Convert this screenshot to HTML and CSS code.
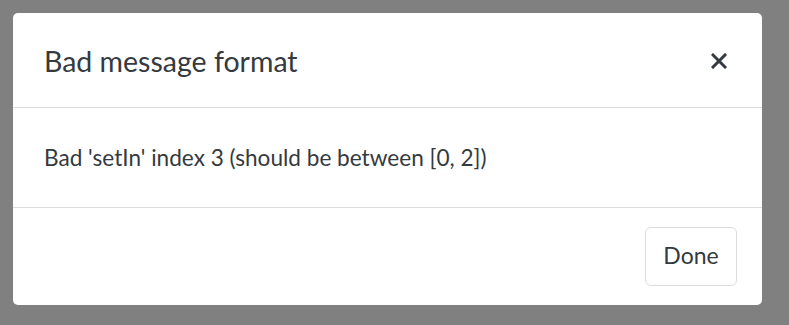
FILE: index.html
```html
<!DOCTYPE html>
<html lang="en">
<head>
<meta charset="utf-8">
<title>Bad message format</title>
<link rel="stylesheet" href="styles.css">
</head>
<body>
<div class="backdrop">
  <div class="modal">
    <div class="modal-header">
      <h5 class="modal-title">Bad message format</h5>
      <button class="close" aria-label="Close">
        <svg width="16" height="16" viewBox="0 0 16 16"><path d="M2 2 L14 14 M14 2 L2 14" stroke="#343a40" stroke-width="3" stroke-linecap="square" fill="none"/></svg>
      </button>
    </div>
    <div class="modal-body">Bad 'setIn' index 3 (should be between [0, 2])</div>
    <div class="modal-footer">
      <button class="btn">Done</button>
    </div>
  </div>
</div>
</body>
</html>
```

FILE: styles.css
```css
html, body {
  margin: 0;
  padding: 0;
}
body {
  background: #808080;
  font-family: Lato, "Liberation Sans", sans-serif;
  color: #343a40;
}
.backdrop {
  width: 789px;
  height: 325px;
  padding: 13px 0 0 13px;
  box-sizing: border-box;
}
.modal {
  width: 749px;
  height: 292px;
  background: #fff;
  border-radius: 5px;
  display: flex;
  flex-direction: column;
  box-sizing: border-box;
  overflow: hidden;
}
.modal-header {
  height: 95px;
  box-sizing: border-box;
  border-bottom: 1px solid #dcdcdc;
  display: flex;
  align-items: center;
  justify-content: space-between;
  padding: 2px 35px 0 31px;
}
.modal-title {
  margin: 0;
  font-size: 28.5px;
  font-weight: 400;
  line-height: 1.2;
}
.close {
  border: 0;
  background: none;
  padding: 0;
  width: 16px;
  height: 16px;
  display: flex;
}
.modal-body {
  height: 100px;
  box-sizing: border-box;
  border-bottom: 1px solid #dcdcdc;
  display: flex;
  align-items: center;
  padding: 0 32px 0 31px;
  font-size: 22.6px;
}
.modal-footer {
  flex: 1;
  display: flex;
  justify-content: flex-end;
  align-items: flex-start;
  padding: 19px 25px 0 0;
}
.btn {
  width: 92px;
  height: 59px;
  border: 1px solid #dcdcdc;
  border-radius: 6px;
  background: #fff;
  font-family: Lato, "Liberation Sans", sans-serif;
  font-size: 23px;
  color: #343a40;
  padding: 0 0 3px 0;
}
```
